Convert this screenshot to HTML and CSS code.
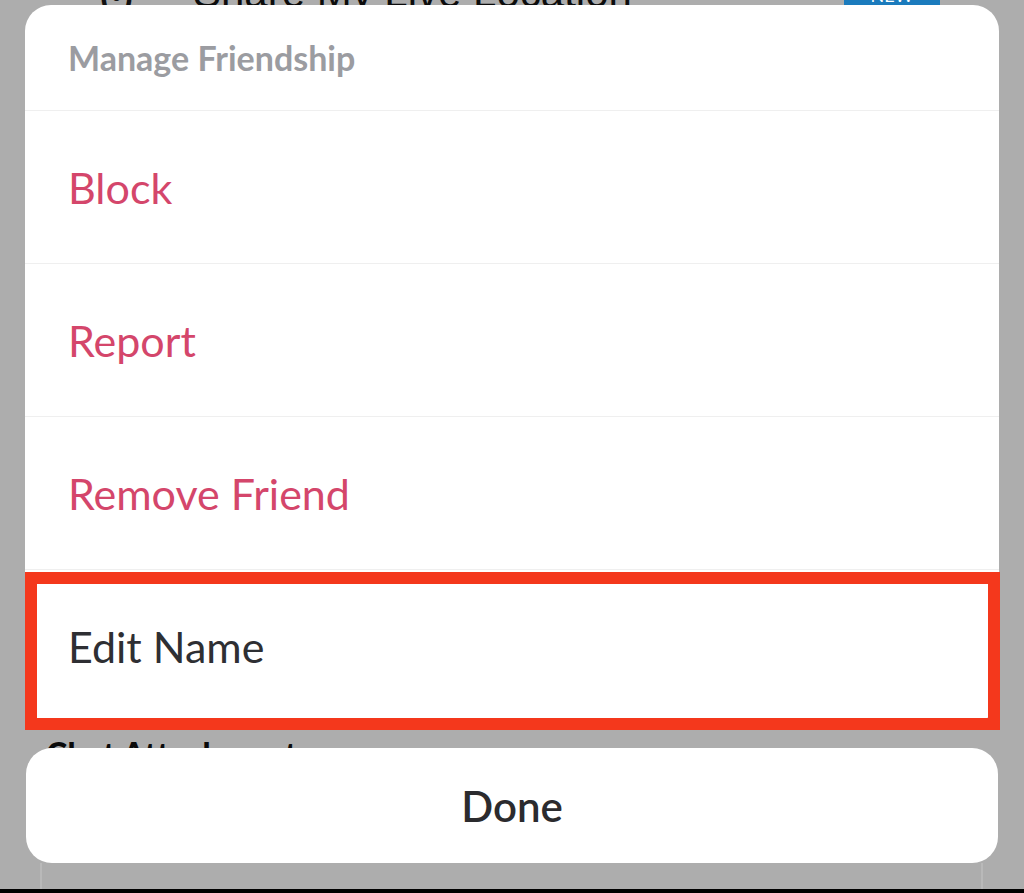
FILE: index.html
```html
<!DOCTYPE html>
<html>
<head>
<meta charset="utf-8">
<link rel="stylesheet" href="styles.css">
</head>
<body>
<div class="screen">
  <div class="peek-top">
    <div class="share-row">
      <span class="loc-icon">(·)</span>
      <span class="share-text">Share My Live Location</span>
      <span class="badge">NEW</span>
    </div>
  </div>
  <div class="sheet-wrap">
    <div class="sheet">
      <div class="sheet-title">Manage Friendship</div>
      <div class="row danger">Block</div>
      <div class="row danger">Report</div>
      <div class="row danger">Remove Friend</div>
      <div class="row">Edit Name</div>
    </div>
    <div class="highlight"></div>
  </div>
  <div class="peek-mid"><div class="section-title">Chat Attachments</div></div>
  <div class="done">Done</div>
  <div class="peek-bottom"><div class="card-edge"></div></div>
  <div class="bottom-bar"></div>
</div>
</body>
</html>
```

FILE: styles.css
```css
html, body {
  margin: 0;
  padding: 0;
  background: #adadad;
  overflow: hidden;
}
.screen {
  width: 1024px;
  height: 893px;
  display: flex;
  flex-direction: column;
  font-family: Lato, "Open Sans", sans-serif;
  background: #adadad;
}
.peek-top {
  height: 5px;
  overflow: hidden;
  display: flex;
  align-items: flex-end;
}
.share-row {
  height: 40px;
  flex: 0 0 auto;
  width: 1024px;
  display: flex;
  align-items: flex-end;
  position: relative;
  top: 9px;
}
.loc-icon {
  margin-left: 100px;
  font-size: 40px;
  font-weight: 700;
  color: #111;
  line-height: 1;
}
.share-text {
  margin-left: 60px;
  font-family: "Liberation Sans", sans-serif;
  font-size: 42px;
  color: #0c0c0c;
  line-height: 1;
}
.badge {
  margin-left: auto;
  margin-right: 84px;
  width: 96px;
  height: 30px;
  background: #1b7bbd;
  color: #fff;
  font-size: 18px;
  text-align: center;
}
.sheet-wrap {
  position: relative;
  z-index: 2;
  margin-left: 25px;
  width: 974px;
}
.sheet {
  background: #fff;
  border-radius: 26px;
  overflow: hidden;
  height: 717px;
  display: flex;
  flex-direction: column;
}
.sheet-title {
  height: 105px;
  flex: 0 0 105px;
  box-sizing: border-box;
  padding-left: 43px;
  display: flex;
  align-items: center;
  font-size: 34px;
  font-weight: 700;
  color: #9b9ca1;
}
.row {
  height: 153px;
  flex: 0 0 153px;
  box-sizing: border-box;
  border-top: 1px solid #efefef;
  padding-left: 43px;
  display: flex;
  align-items: center;
  font-size: 43px;
  color: #2e2f33;
}
.row.danger {
  color: #d4466b;
}
.highlight {
  position: absolute;
  left: 0;
  top: 567px;
  width: 975px;
  height: 158px;
  box-sizing: border-box;
  border: 12px solid #f4381c;
}
.peek-mid {
  height: 26px;
  flex: 0 0 26px;
  overflow: hidden;
  padding-left: 46px;
}
.section-title {
  padding-top: 13px;
  font-size: 32px;
  font-weight: 900;
  color: #0a0a0a;
  line-height: 1.2;
  letter-spacing: 0.5px;
}
.done {
  margin-left: 26px;
  width: 972px;
  height: 115px;
  flex: 0 0 115px;
  background: #fff;
  border-radius: 26px;
  display: flex;
  align-items: center;
  justify-content: center;
  font-size: 42px;
  font-weight: 600;
  color: #2b2b2e;
}
.peek-bottom {
  height: 26px;
  flex: 0 0 26px;
  display: flex;
}
.card-edge {
  margin-left: 40px;
  width: 943px;
  box-sizing: border-box;
  border-left: 2px solid #b9b9b9;
  border-right: 2px solid #b9b9b9;
}
.bottom-bar {
  flex: 1 1 auto;
  background: #000;
}
```
